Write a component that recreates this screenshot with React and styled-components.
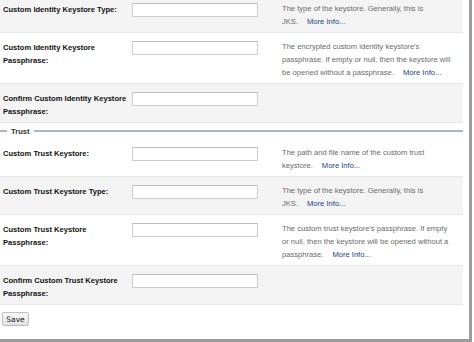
import React from 'react';
import styled, { createGlobalStyle } from 'styled-components';

const GlobalStyle = createGlobalStyle`
  html, body {
    margin: 0;
    padding: 0;
    background: #fff;
    overflow: hidden;
  }
`;

const Frame = styled.div`
  box-sizing: border-box;
  width: 472px;
  height: 342px;
  border-right: 3px solid #9c9c9c;
  border-bottom: 3px solid #9c9c9c;
  overflow: hidden;
  font-family: 'Liberation Sans', Arial, sans-serif;
`;

const Form = styled.div`
  width: 463px;
  margin-top: -5px;
`;

const Row = styled.div`
  display: grid;
  grid-template-columns: 132px 150px 1fr;
  align-items: start;
  padding: 8px 0 4px;
  background: ${(p) => (p.$shaded ? '#f4f4f4' : '#fff')};
  border-bottom: 1px solid #e6e6e6;
`;

const Label = styled.div`
  padding-left: 3px;
  padding-right: 4px;
  font-size: 7.6px;
  line-height: 13px;
  font-weight: bold;
  color: #111;
`;

const Field = styled.input`
  box-sizing: border-box;
  display: block;
  width: 126px;
  height: 14px;
  margin: 0;
  padding: 0 2px;
  border: 1px solid #cdcdcd;
  border-top-color: #bdbdbd;
  background: #fff;
  font-size: 8px;
`;

const Help = styled.div`
  margin-top: -1px;
  font-size: 7.6px;
  line-height: 13px;
  color: #6a6a6a;
  white-space: nowrap;
`;

const MoreInfo = styled.a`
  margin-left: 9px;
  color: #23427c;
  text-decoration: none;
`;

const Section = styled.div`
  display: flex;
  align-items: center;
  gap: 4px;
  height: 16px;
  font-size: 7.6px;
  font-weight: bold;
  color: #333;
`;

const Rule = styled.span`
  height: 2px;
  background: #aab6c3;
  flex: ${(p) => (p.$short ? '0 0 7px' : '1')};
`;

const Actions = styled.div`
  padding: 7px 0 0 2px;
`;

const SaveButton = styled.button`
  box-sizing: border-box;
  display: block;
  height: 14px;
  width: 27px;
  padding: 0;
  border: 1px solid #bdbdbd;
  border-radius: 2px;
  background: linear-gradient(#fbfbfb, #e2e2e2);
  font-family: 'DejaVu Sans', 'Liberation Sans', sans-serif;
  font-size: 7.5px;
  color: #222;
`;

const identityRows = [
  {
    label: 'Custom Identity Keystore Type:',
    help: ['The type of the keystore. Generally, this is', 'JKS.'],
  },
  {
    label: 'Custom Identity Keystore Passphrase:',
    help: [
      "The encrypted custom identity keystore's",
      'passphrase. If empty or null, then the keystore will',
      'be opened without a passphrase.',
    ],
  },
  { label: 'Confirm Custom Identity Keystore Passphrase:' },
];

const trustRows = [
  {
    label: 'Custom Trust Keystore:',
    help: ['The path and file name of the custom trust', 'keystore.'],
  },
  {
    label: 'Custom Trust Keystore Type:',
    help: ['The type of the keystore. Generally, this is', 'JKS.'],
  },
  {
    label: 'Custom Trust Keystore Passphrase:',
    help: [
      "The custom trust keystore's passphrase. If empty",
      'or null, then the keystore will be opened without a',
      'passphrase.',
    ],
  },
  { label: 'Confirm Custom Trust Keystore Passphrase:' },
];

function FormRow({ row, shaded }) {
  return (
    <Row $shaded={shaded}>
      <Label>{row.label}</Label>
      <div>
        <Field type="text" />
      </div>
      {row.help ? (
        <Help>
          {row.help.map((line, i) => (
            <div key={i}>
              {line}
              {i === row.help.length - 1 && <MoreInfo href="#">More Info...</MoreInfo>}
            </div>
          ))}
        </Help>
      ) : (
        <div />
      )}
    </Row>
  );
}

export default function App() {
  return (
    <>
      <GlobalStyle />
      <Frame>
        <Form>
          {identityRows.map((row, i) => (
            <FormRow key={row.label} row={row} shaded={i % 2 === 0} />
          ))}
          <Section>
            <Rule $short />
            <span>Trust</span>
            <Rule />
          </Section>
          {trustRows.map((row, i) => (
            <FormRow key={row.label} row={row} shaded={i % 2 === 1} />
          ))}
          <Actions>
            <SaveButton type="button">Save</SaveButton>
          </Actions>
        </Form>
      </Frame>
    </>
  );
}
